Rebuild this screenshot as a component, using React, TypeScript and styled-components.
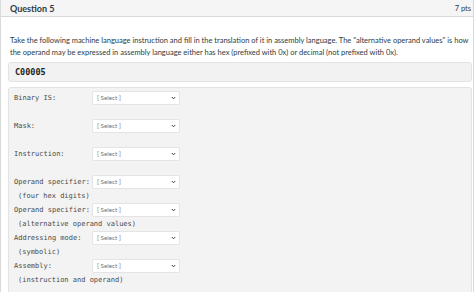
import React from "react";
import styled, { createGlobalStyle } from "styled-components";

const Global = createGlobalStyle`
  html, body { margin: 0; padding: 0; background: #fff; }
  body { font-family: Lato, "Open Sans", sans-serif; color: #2d3b45; }
`;

const Card = styled.div`
  width: 474px;
  height: 292px;
  box-sizing: border-box;
  border-left: 1px solid #dadada;
  border-right: 1px solid #dadada;
  overflow: hidden;
`;

const Header = styled.div`
  height: 17px;
  box-sizing: border-box;
  background: #f5f5f5;
  border-bottom: 1px solid #d9d9d9;
  display: flex;
  align-items: center;
  justify-content: space-between;
  padding: 0 2px 0 9px;
`;

const Title = styled.span`
  font-weight: 700;
  font-size: 9px;
  color: #2d3b45;
`;

const Points = styled.span`
  font-size: 7.5px;
  color: #2d3b45;
`;

const Body = styled.div`
  padding: 18px 1px 0 7px;
`;

const Prompt = styled.p`
  margin: 0 0 3px 2px;
  font-size: 7.5px;
  line-height: 12px;
  color: #2d3b45;
`;

const Code = styled.div`
  height: 20px;
  box-sizing: border-box;
  background: #f2f2f2;
  border: 1px solid #e3e3e3;
  border-radius: 3px;
  display: flex;
  align-items: center;
  padding-left: 6px;
  font-family: "DejaVu Sans Mono", monospace;
  font-weight: 700;
  font-size: 8.5px;
  color: #222;
`;

const Form = styled.div`
  margin-top: 5px;
  background: #f3f3f3;
  border: 1px solid #e3e3e3;
  border-radius: 3px;
  padding: 3px 0 0 5px;
  height: 230px;
`;

const Row = styled.div`
  display: flex;
  align-items: flex-start;
  height: 28px;
`;

const Label = styled.div`
  width: 78px;
  font-family: "DejaVu Sans Mono", monospace;
  font-size: 7px;
  line-height: 14px;
  color: #4a4a4a;
  white-space: pre;
`;

const Sub = styled.div`
  padding-left: 4px;
`;

const Select = styled.div`
  width: 88px;
  height: 14px;
  box-sizing: border-box;
  background: #fff;
  border: 1px solid #e4e4e4;
  border-radius: 2px;
  display: flex;
  align-items: center;
  justify-content: space-between;
  padding: 0 3px 1px 4px;
  font-size: 6.3px;
  color: #777;
  white-space: pre;
`;

const Chevron = () => (
  <svg width="5" height="4" viewBox="0 0 5 4">
    <path d="M0.8 1 L2.5 2.8 L4.2 1" fill="none" stroke="#444" strokeWidth="1" />
  </svg>
);

const rows: { label: string; sub?: string }[] = [
  { label: "Binary IS:" },
  { label: "Mask:" },
  { label: "Instruction:" },
  { label: "Operand specifier:", sub: "(four hex digits)" },
  { label: "Operand specifier:", sub: "(alternative operand values)" },
  { label: "Addressing mode:", sub: "(symbolic)" },
  { label: "Assembly:", sub: "(instruction and operand)" },
];

export default function App() {
  return (
    <>
      <Global />
      <Card>
        <Header>
          <Title>Question 5</Title>
          <Points>7 pts</Points>
        </Header>
        <Body>
          <Prompt>
            Take the following machine language instruction and fill in the translation of it in assembly language. The "alternative operand values" is how the operand may be expressed in assembly language either has hex (prefixed with 0x) or decimal (not prefixed with 0x).
          </Prompt>
          <Code>C00005</Code>
          <Form>
            {rows.map((r, i) => (
              <Row key={i}>
                <Label>
                  <div>{r.label}</div>
                  {r.sub && <Sub>{r.sub}</Sub>}
                </Label>
                <Select>
                  <span>[ Select ]</span>
                  <Chevron />
                </Select>
              </Row>
            ))}
          </Form>
        </Body>
      </Card>
    </>
  );
}
